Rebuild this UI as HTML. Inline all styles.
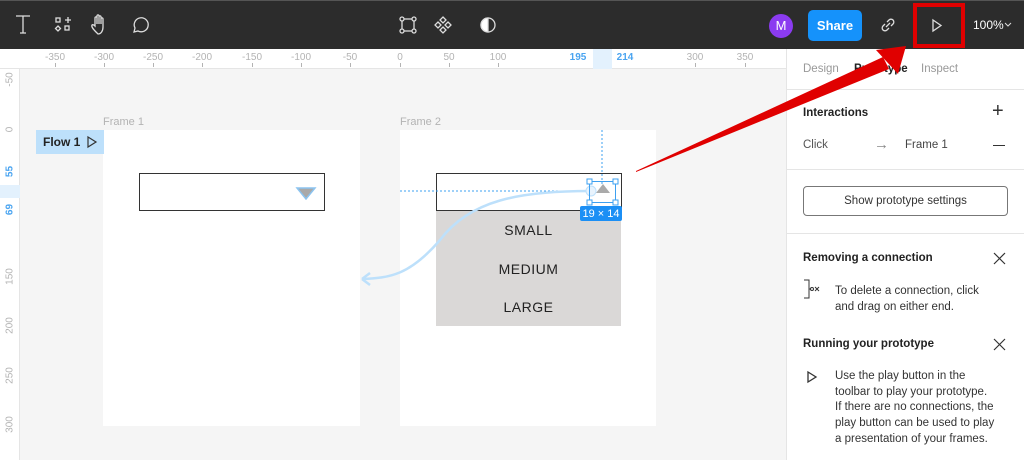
<!DOCTYPE html>
<html><head><meta charset="utf-8"><style>
*{margin:0;padding:0;box-sizing:border-box}
body{width:1024px;height:460px;overflow:hidden;position:relative;background:#f5f5f5;font-family:"Liberation Sans",sans-serif}
.a{position:absolute}
.top{left:0;top:0;width:1024px;height:49px;background:#2c2c2c;border-top:1px solid #555}
.rt{left:0;top:49px;width:786px;height:20px;background:#fff;border-bottom:1px solid #e5e5e5}
.rl{left:0;top:69px;width:20px;height:391px;background:#fff;border-right:1px solid #e5e5e5}
.rn{font-size:10px;color:#b3b3b3;top:52px;width:40px;text-align:center}
.tk{width:1px;height:4px;background:#b3b3b3;top:63px}
.vn{font-size:10px;color:#b3b3b3;left:-10px;width:40px;text-align:center;transform:rotate(-90deg)}
.panel{left:786px;top:49px;width:238px;height:411px;background:#fff;border-left:1px solid #e5e5e5}
.p{font-size:11.5px;color:#333}
.b{font-weight:bold;color:#222}
.sep{left:786px;width:238px;height:1px;background:#e5e5e5}
.fr{background:#fff}
.lbl{font-size:11px;color:#b3b3b3}
.item{font-size:14px;color:#222;width:185px;text-align:center;left:436px;letter-spacing:.5px}
</style></head><body>
<div class="a top"></div>
<svg class="a" style="left:10px;top:12px" width="160" height="26" viewBox="0 0 160 26" fill="none" stroke="#ddd" stroke-width="1.3">
<path d="M6 4h14M13 4v17M10 21h6"/>
<rect x="46" y="6" width="4" height="4"/><path d="M58 5v6M55 8h6"/><path d="M48 14l2.5 2.5L48 19l-2.5-2.5z"/><rect x="55" y="14" width="4" height="4"/>
<path d="M86 20c-2-2-5-5-4-7 1-1 2 0 3 1V6c0-1.5 2-1.5 2 0v6V4c0-1.5 2-1.5 2 0v8V5c0-1.5 2-1.5 2 0v7V7c0-1.5 2-1.5 2 0v8c0 4-2 7-5 7z"/>
<path d="M124 20l1-4a7 7 0 1 1 3 3z"/>
</svg>
<svg class="a" style="left:395px;top:12px" width="110" height="26" viewBox="0 0 110 26" fill="none" stroke="#ddd" stroke-width="1.3">
<rect x="7" y="7" width="12" height="12"/><circle cx="7" cy="7" r="2" fill="#2c2c2c"/><circle cx="19" cy="7" r="2" fill="#2c2c2c"/><circle cx="7" cy="19" r="2" fill="#2c2c2c"/><circle cx="19" cy="19" r="2" fill="#2c2c2c"/>
<path d="M48 5l3 3-3 3-3-3zM48 15l3 3-3 3-3-3zM43 10l3 3-3 3-3-3zM53 10l3 3-3 3-3-3z"/>
<circle cx="93" cy="13" r="7"/><path d="M93 6a7 7 0 0 0 0 14z" fill="#fff"/>
</svg>
<div class="a" style="left:769px;top:14px;width:24px;height:24px;border-radius:50%;background:#8b3bf0;color:#fff;font-size:13px;text-align:center;line-height:24px">M</div>
<div class="a" style="left:808px;top:10px;width:54px;height:31px;border-radius:5px;background:#1592fb;color:#fff;font-size:13px;font-weight:bold;text-align:center;line-height:31px">Share</div>
<svg class="a" style="left:877px;top:14px" width="22" height="22" viewBox="0 0 22 22" fill="none" stroke="#ddd" stroke-width="1.3"><path d="M9 13l4-4M8 10l-2 2a2.8 2.8 0 0 0 4 4l2-2M14 12l2-2a2.8 2.8 0 0 0-4-4l-2 2"/></svg>
<div class="a" style="left:913px;top:3px;width:52px;height:45px;border:4px solid #e00000"></div>
<svg class="a" style="left:930px;top:18px" width="14" height="15" viewBox="0 0 14 15" fill="none" stroke="#ddd" stroke-width="1.3"><path d="M3 2l8 5.5L3 13z"/></svg>
<div class="a" style="left:973px;top:18px;font-size:12px;color:#fff">100%</div>
<svg class="a" style="left:1004px;top:22px" width="8" height="6" viewBox="0 0 8 6" fill="none" stroke="#ddd"><path d="M1 1l3 3 3-3"/></svg>
<div class="a rt"></div>
<div class="a" style="left:593px;top:49px;width:19px;height:20px;background:#e3f1fd"></div>
<div class="a rn" style="left:35px">-350</div><div class="a tk" style="left:55px"></div>
<div class="a rn" style="left:84px">-300</div><div class="a tk" style="left:104px"></div>
<div class="a rn" style="left:133px">-250</div><div class="a tk" style="left:153px"></div>
<div class="a rn" style="left:182px">-200</div><div class="a tk" style="left:202px"></div>
<div class="a rn" style="left:232px">-150</div><div class="a tk" style="left:252px"></div>
<div class="a rn" style="left:281px">-100</div><div class="a tk" style="left:301px"></div>
<div class="a rn" style="left:330px">-50</div><div class="a tk" style="left:350px"></div>
<div class="a rn" style="left:380px">0</div><div class="a tk" style="left:400px"></div>
<div class="a rn" style="left:429px">50</div><div class="a tk" style="left:449px"></div>
<div class="a rn" style="left:478px">100</div><div class="a tk" style="left:498px"></div>
<div class="a rn" style="left:558px;color:#4aa4f0;font-weight:bold">195</div>
<div class="a rn" style="left:605px;color:#4aa4f0;font-weight:bold">214</div>
<div class="a rn" style="left:675px">300</div><div class="a tk" style="left:695px"></div>
<div class="a rn" style="left:725px">350</div><div class="a tk" style="left:745px"></div>
<div class="a rl"></div>
<div class="a" style="left:0;top:185px;width:20px;height:13px;background:#e3f1fd"></div>
<div class="a vn" style="top:74px">-50</div>
<div class="a vn" style="top:124px">0</div>
<div class="a vn" style="top:166px;color:#4aa4f0;font-weight:bold">55</div>
<div class="a vn" style="top:204px;color:#4aa4f0;font-weight:bold">69</div>
<div class="a vn" style="top:271px">150</div>
<div class="a vn" style="top:320px">200</div>
<div class="a vn" style="top:370px">250</div>
<div class="a vn" style="top:419px">300</div>
<div class="a lbl" style="left:103px;top:116px">Frame 1</div>
<div class="a lbl" style="left:400px;top:116px">Frame 2</div>
<div class="a fr" style="left:103px;top:130px;width:257px;height:296px"></div>
<div class="a fr" style="left:400px;top:130px;width:256px;height:296px"></div>
<div class="a" style="left:36px;top:130px;width:68px;height:24px;background:#bde0fb;font-size:12px;color:#222;font-weight:bold;line-height:24px;padding-left:7px">Flow 1</div>
<svg class="a" style="left:85px;top:135px" width="14" height="14" viewBox="0 0 14 14" fill="none" stroke="#333" stroke-width="1.2"><path d="M3 2l8 5-8 5z"/></svg>
<div class="a" style="left:139px;top:173px;width:186px;height:38px;border:1.5px solid #333;background:#fff"></div>
<svg class="a" style="left:295px;top:186px" width="22" height="14" viewBox="0 0 22 14"><path d="M2 2h18l-9 11z" fill="#a9a9a9" stroke="#8cc4f0" stroke-width="1.5"/></svg>
<div class="a" style="left:436px;top:173px;width:186px;height:38px;border:1.5px solid #333;background:#fff"></div>
<div class="a" style="left:436px;top:211px;width:185px;height:115px;background:#dad8d7"></div>
<div class="a item" style="top:222px">SMALL</div>
<div class="a item" style="top:261px">MEDIUM</div>
<div class="a item" style="top:299px">LARGE</div>
<svg class="a" style="left:0;top:0" width="786" height="460" viewBox="0 0 786 460">
<path d="M400 191H590M602 130V185" stroke="#3ea0f0" stroke-dasharray="2 2" fill="none"/>
<path d="M590 191C520 191 470 200 440 240C410 275 390 278 362 279M362 279l8-6M362 279l8 6" stroke="#bde0fb" stroke-width="2.5" fill="none"/>
<circle cx="591" cy="191" r="5" fill="#e8f3fd" stroke="#bde0fb"/>
<path d="M596 193l7-9 7 9z" fill="#aaa"/>
<rect x="589.5" y="181.5" width="26" height="21" fill="none" stroke="#3ea0f0"/>
<g fill="#fff" stroke="#3ea0f0"><rect x="587" y="179" width="5" height="5"/><rect x="613" y="179" width="5" height="5"/><rect x="587" y="200" width="5" height="5"/><rect x="613" y="200" width="5" height="5"/></g>
<rect x="580" y="206" width="42" height="15" rx="2" fill="#1b8ff5"/>
<text x="601" y="217" font-size="11" fill="#fff" text-anchor="middle" font-family="Liberation Sans">19 × 14</text>
</svg>
<div class="a panel"></div>
<div class="a p" style="left:803px;top:63px;color:#999">Design</div>
<div class="a p b" style="left:854px;top:63px">Prototype</div>
<div class="a p" style="left:921px;top:63px;color:#999">Inspect</div>
<div class="a sep" style="top:89px"></div>
<div class="a p b" style="left:803px;top:107px">Interactions</div>
<div class="a" style="left:992px;top:100px;font-size:20px;color:#333">+</div>
<div class="a p" style="left:803px;top:139px;color:#555">Click</div>
<div class="a" style="left:874px;top:136px;font-size:15px;color:#888">→</div>
<div class="a p" style="left:905px;top:139px;color:#444">Frame 1</div>
<div class="a" style="left:993px;top:145px;width:12px;height:1px;background:#333"></div>
<div class="a sep" style="top:169px"></div>
<div class="a p" style="left:803px;top:186px;width:205px;height:30px;border:1px solid #777;border-radius:4px;text-align:center;line-height:28px">Show prototype settings</div>
<div class="a sep" style="top:233px"></div>
<div class="a p b" style="left:803px;top:252px">Removing a connection</div>
<div class="a p b" style="left:803px;top:338px">Running your prototype</div>
<svg class="a" style="left:990px;top:250px" width="20" height="110" viewBox="0 0 20 110" fill="none" stroke="#333" stroke-width="1.2"><path d="M4 3l11 11M15 3L4 14M4 89l11 11M15 89L4 100"/></svg>
<svg class="a" style="left:802px;top:279px" width="24" height="20" viewBox="0 0 24 20" fill="none" stroke="#333"><path d="M2 1h5v18H2M7 10h2"/><circle cx="10" cy="10" r="1.5"/><path d="M13 8l4 4M17 8l-4 4"/></svg>
<svg class="a" style="left:806px;top:370px" width="12" height="14" viewBox="0 0 12 14" fill="none" stroke="#333" stroke-width="1.3"><path d="M2 2l8 5-8 5z"/></svg>
<div class="a p" style="left:835px;top:283px;line-height:16px">To delete a connection, click<br>and drag on either end.</div>
<div class="a p" style="left:835px;top:369px;line-height:15.7px">Use the play button in the<br>toolbar to play your prototype.<br>If there are no connections, the<br>play button can be used to play<br>a presentation of your frames.</div>
<svg class="a" style="left:0;top:0" width="1024" height="460" viewBox="0 0 1024 460">
<path d="M636 171L636 172L889 69L883 57z" fill="#e00000"/>
<path d="M906 46L876 50L898 74z" fill="#e00000"/>
</svg>
</body></html>
